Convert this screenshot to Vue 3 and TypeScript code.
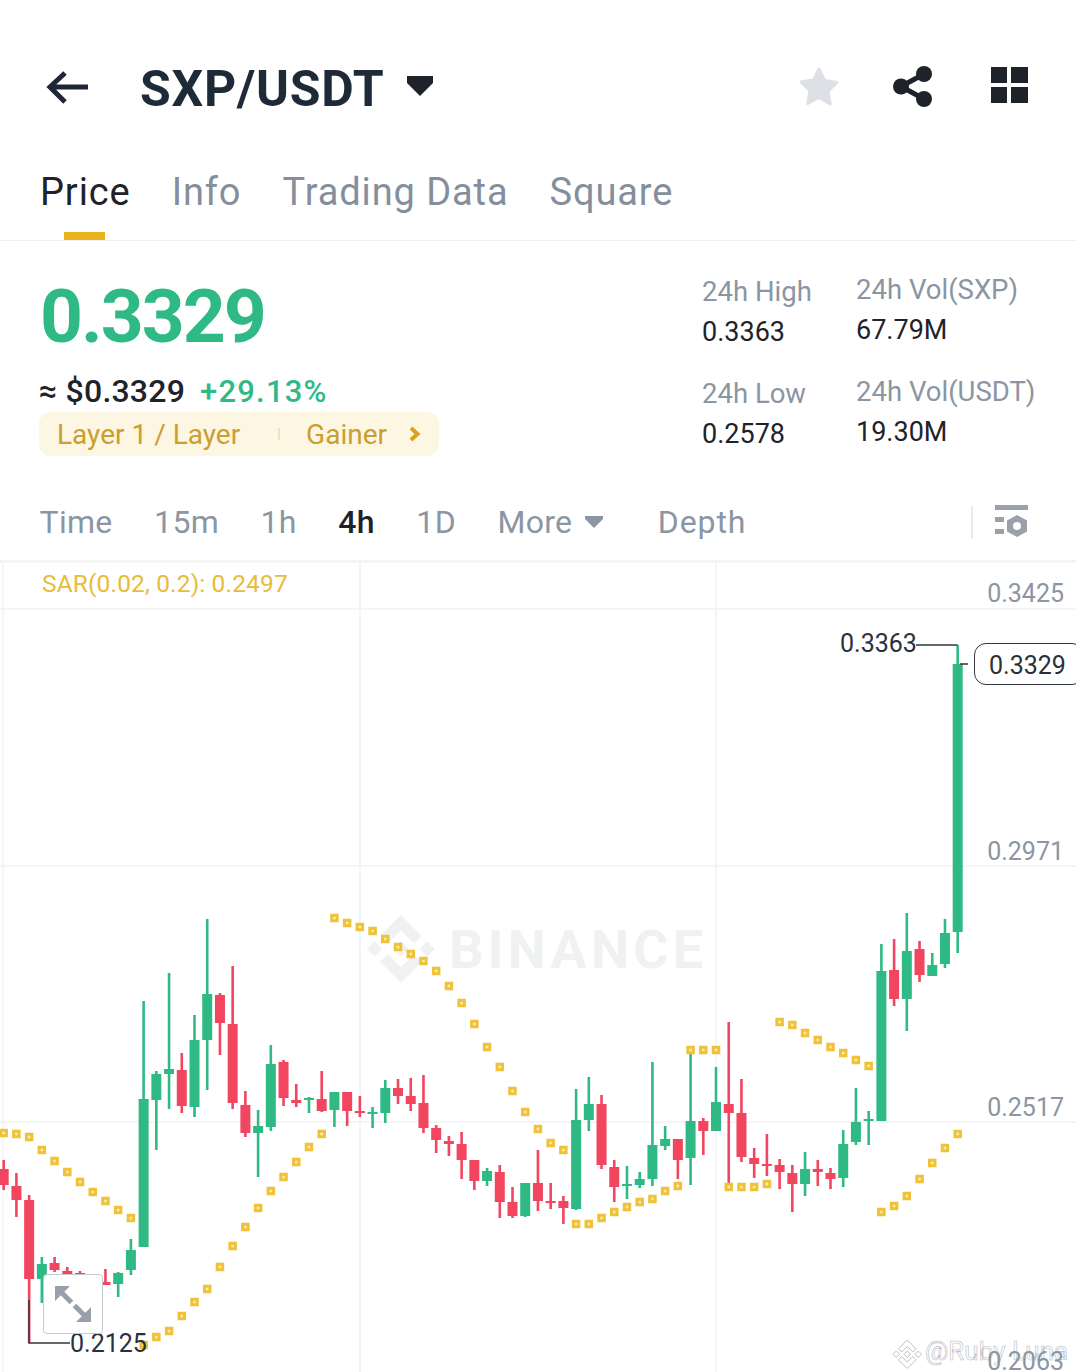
<template>
  <div class="screen">
    <header class="top-bar">
      <svg class="back-icon" viewBox="0 0 44 36" width="44" height="36">
        <path d="M42 16H5M19 2 4 16l15 15" fill="none" stroke="#1e2733" stroke-width="5" />
      </svg>
      <h1 class="pair">SXP/USDT</h1>
      <svg class="pair-caret" viewBox="0 0 26 20" width="26" height="20">
        <path d="M0 0h26v7L13 20 0 7z" fill="#1e2329" />
      </svg>
      <div class="top-actions">
        <svg viewBox="0 0 42 42" width="42" height="42">
          <path d="M21 4l5.600 11.600 12.400 1.800-9 8.900 2.200 12.700L21 32.500 9.800 38.500 12 25.800l-9-8.900 12.400-1.800z" fill="#dde0e4" stroke="#dde0e4" stroke-width="3" stroke-linejoin="round" />
        </svg>
        <svg viewBox="0 0 42 42" width="42" height="42">
          <path d="M32 9 9 21.500 32 34" fill="none" stroke="#1e2329" stroke-width="5" />
          <circle cx="32" cy="9" r="8" fill="#1e2329" />
          <circle cx="9" cy="21.500" r="8" fill="#1e2329" />
          <circle cx="32" cy="34" r="8" fill="#1e2329" />
        </svg>
        <svg class="top-actions__grid" viewBox="0 0 38 38" width="38" height="38">
          <path d="M0 0h16v16H0zM20 0h17v16H20zM0 20h16v16H0zM20 20h17v16H20z" fill="#1e2329" />
        </svg>
      </div>
    </header>

    <nav class="tabs">
      <div v-for="tab in tabs" :key="tab" class="tab" :class="{ 'tab--active': tab === 'Price' }">{{ tab }}</div>
    </nav>

    <section class="summary">
      <div class="summary__left">
        <div class="last-price">0.3329</div>
        <div class="fiat-line">
          <span class="fiat">≈ $0.3329</span>
          <span class="change">+29.13%</span>
        </div>
        <div class="tag-pill">
          <span class="tag-pill__first">Layer 1 / Layer</span>
          <i class="tag-pill__sep"></i>
          <span>Gainer</span>
          <svg viewBox="0 0 12 16" width="12" height="16">
            <path d="M2 2l6.500 6-6.500 6" fill="none" stroke="#d9a21b" stroke-width="4" />
          </svg>
        </div>
      </div>
      <div class="stats">
        <div v-for="col in stats" :key="col[0].label" class="stats__col">
          <div v-for="s in col" :key="s.label" class="stat">
            <div class="stat__label">{{ s.label }}</div>
            <div class="stat__value">{{ s.value }}</div>
          </div>
        </div>
      </div>
    </section>

    <div class="intervals">
      <span v-for="it in intervals" :key="it" class="interval" :class="{ 'interval--active': it === '4h' }">{{ it }}</span>
      <span class="interval interval--more">
        More
        <svg viewBox="0 0 18 12" width="18" height="12"><path d="M0 0h18v3l-9 9-9-9z" fill="#8b95a3" /></svg>
      </span>
      <span class="interval interval--depth">Depth</span>
      <i class="intervals__divider"></i>
      <svg class="settings-icon" viewBox="0 0 34 36" width="34" height="36">
        <path d="M0 1h33v5H0zM0 13h9v5H0zM0 25h9v5H0z" fill="#9aa1ab" />
        <path fill-rule="evenodd" d="M22 11l10 5.500v11L22 33l-10-5.500v-11zM22 18a4 4 0 1 0 0 8 4 4 0 0 0 0-8z" fill="#9aa1ab" />
      </svg>
    </div>

    <div class="chart">
      <svg class="chart__svg" viewBox="0 563 1076 809" width="1076" height="809">
        <g stroke="#f1f2f4" stroke-width="1.500">
          <line x1="0" y1="609" x2="1076" y2="609" />
          <line x1="0" y1="866" x2="1076" y2="866" />
          <line x1="0" y1="1122" x2="1076" y2="1122" />
          <line x1="3" y1="563" x2="3" y2="1372" />
          <line x1="360" y1="563" x2="360" y2="1372" />
          <line x1="716" y1="563" x2="716" y2="1372" />
        </g>

        <g transform="translate(367 915) scale(0.535)" fill="#eff1f2">
          <path :d="logoPath" />
        </g>
        <text class="watermark" x="449" y="968">BINANCE</text>

        <g v-for="(c, i) in candles" :key="i" :fill="c[4] === 'g' ? green : red">
          <rect :x="xAt(i) - 1.3" :y="c[0]" width="2.600" :height="c[3] - c[0]" />
          <rect :x="xAt(i) - 5" :y="c[1]" width="10" :height="c[2] - c[1]" />
        </g>

        <rect
          v-for="d in sarDots"
          :key="d[0]"
          class="sar-dot"
          :x="xAt(d[0]) - 2.75"
          :y="d[1] - 2.75"
          width="5.500"
          height="5.500"
        />

        <path d="M29 1300v43h41" fill="none" stroke="#2f3640" stroke-width="1.500" />
        <path d="M916 645h41.500" fill="none" stroke="#2f3640" stroke-width="1.500" />
        <path d="M960 664h8" fill="none" stroke="#2f3640" stroke-width="1.500" />

        <text class="axis" x="1064" y="602">0.3425</text>
        <text class="axis" x="1064" y="860">0.2971</text>
        <text class="axis" x="1064" y="1116">0.2517</text>
        <text class="peak" x="840" y="652">0.3363</text>

        <g transform="translate(893 1340) scale(0.225)" fill="#fff" stroke="#b4b8bd" stroke-width="4">
          <path :d="logoPath" />
        </g>
        <text class="credit" x="925" y="1360">@Ruby Luna</text>
        <text class="axis" x="1064" y="1370">0.2063</text>
        <text class="peak" x="70" y="1352">0.2125</text>
      </svg>

      <div class="chart__legend">SAR(0.02, 0.2): 0.2497</div>
      <div class="chart__last">0.3329</div>
      <button class="chart__expand" type="button">
        <svg viewBox="0 0 36 36" width="36" height="36">
          <path d="M0 0h15L0 15zM36 36H21l15-15z" fill="#9aa0a9" />
          <path d="M6 6l10.500 10.500M19.500 19.500L30 30" fill="none" stroke="#9aa0a9" stroke-width="5" />
        </svg>
      </button>
    </div>
  </div>
</template>

<script setup lang="ts">
type Candle = [number, number, number, number, 'g' | 'r']

const green = '#2fba85'
const red = '#f2455f'

const logoPath =
  'M38.73 53.2l24.59-24.58 24.6 24.6 14.3-14.31L63.32 0 24.42 38.9zM0 63.31l14.3-14.31 14.31 14.31-14.31 14.3zm38.73 10.1l24.59 24.59 24.6-24.6 14.31 14.29-38.9 38.91-38.91-38.88v-.03zm59.42-10.09l14.3-14.31 14.32 14.31-14.3 14.3zM77.83 63.3L63.32 48.78 52.59 59.51l-1.24 1.23-2.54 2.54 14.51 14.5 14.51-14.47z'

const tabs = ['Price', 'Info', 'Trading Data', 'Square']
const intervals = ['Time', '15m', '1h', '4h', '1D']

const stats = [
  [
    { label: '24h High', value: '0.3363' },
    { label: '24h Low', value: '0.2578' },
  ],
  [
    { label: '24h Vol(SXP)', value: '67.79M' },
    { label: '24h Vol(USDT)', value: '19.30M' },
  ],
]

const xAt = (i: number): number => 3.7 + 12.72 * i

// high, body top, body bottom, low (page pixels)
const candles: Candle[] = [
  [1160, 1169, 1185, 1190, 'r'], [1173, 1186, 1200, 1217, 'r'], [1195, 1200, 1279, 1343, 'r'],
  [1257, 1264, 1279, 1303, 'g'], [1257, 1263, 1270, 1272, 'r'], [1267, 1271, 1274, 1277, 'r'],
  [1271, 1273, 1277, 1280, 'r'], [1275, 1278, 1280, 1282, 'r'], [1269, 1282, 1285, 1285, 'r'],
  [1272, 1273, 1284, 1297, 'g'], [1239, 1250, 1270, 1275, 'g'], [1001, 1099, 1247, 1247, 'g'],
  [1071, 1074, 1100, 1150, 'g'], [973, 1069, 1074, 1109, 'g'], [1053, 1070, 1106, 1113, 'r'],
  [1015, 1040, 1107, 1117, 'g'], [919, 994, 1040, 1090, 'g'], [993, 995, 1023, 1055, 'r'],
  [966, 1024, 1103, 1109, 'r'], [1091, 1105, 1133, 1137, 'r'], [1110, 1126, 1133, 1177, 'g'],
  [1045, 1064, 1127, 1131, 'g'], [1060, 1062, 1098, 1106, 'r'], [1084, 1100, 1103, 1107, 'r'],
  [1097, 1098, 1100, 1113, 'g'], [1071, 1099, 1111, 1112, 'r'], [1092, 1092, 1110, 1127, 'g'],
  [1092, 1092, 1111, 1126, 'r'], [1096, 1111, 1113, 1117, 'r'], [1107, 1112, 1114, 1128, 'g'],
  [1080, 1088, 1113, 1123, 'g'], [1079, 1088, 1096, 1104, 'r'], [1078, 1096, 1104, 1111, 'r'],
  [1075, 1103, 1128, 1133, 'r'], [1125, 1128, 1140, 1153, 'r'], [1136, 1141, 1144, 1156, 'r'],
  [1132, 1144, 1160, 1179, 'r'], [1160, 1160, 1181, 1190, 'r'], [1168, 1171, 1181, 1186, 'g'],
  [1165, 1172, 1202, 1218, 'r'], [1187, 1202, 1216, 1218, 'r'], [1183, 1183, 1216, 1217, 'g'],
  [1150, 1183, 1201, 1211, 'r'], [1183, 1201, 1203, 1209, 'r'], [1196, 1201, 1208, 1224, 'r'],
  [1089, 1120, 1209, 1210, 'g'], [1077, 1104, 1120, 1131, 'g'], [1095, 1104, 1165, 1169, 'r'],
  [1160, 1167, 1187, 1202, 'r'], [1166, 1184, 1186, 1199, 'g'], [1172, 1179, 1185, 1188, 'g'],
  [1062, 1145, 1179, 1186, 'g'], [1126, 1139, 1146, 1150, 'g'], [1139, 1139, 1160, 1179, 'r'],
  [1050, 1121, 1158, 1185, 'g'], [1118, 1121, 1131, 1155, 'r'], [1067, 1102, 1131, 1131, 'g'],
  [1022, 1104, 1113, 1187, 'r'], [1079, 1113, 1157, 1162, 'r'], [1148, 1158, 1164, 1178, 'r'],
  [1134, 1164, 1166, 1176, 'r'], [1159, 1165, 1172, 1189, 'r'], [1165, 1173, 1184, 1212, 'r'],
  [1152, 1169, 1184, 1196, 'g'], [1160, 1169, 1172, 1186, 'r'], [1168, 1173, 1179, 1189, 'r'],
  [1130, 1144, 1178, 1187, 'g'], [1088, 1122, 1142, 1145, 'g'], [1111, 1119, 1121, 1145, 'g'],
  [944, 971, 1121, 1121, 'g'], [939, 970, 999, 1006, 'r'], [913, 951, 999, 1031, 'g'],
  [941, 949, 975, 982, 'r'], [953, 965, 976, 976, 'g'], [919, 933, 964, 968, 'g'],
  [645, 664, 932, 953, 'g'],
]

// candle index, y
const sarDots: [number, number][] = [
  [0, 1133], [1, 1134], [2, 1137], [3, 1150], [4, 1161], [5, 1172], [6, 1182], [7, 1192], [8, 1201],
  [9, 1210], [10, 1218], [11, 1345], [12, 1337], [13, 1331], [14, 1316], [15, 1302], [16, 1289],
  [17, 1267], [18, 1246], [19, 1227], [20, 1208], [21, 1191], [22, 1177], [23, 1162], [24, 1147],
  [25, 1134], [26, 918], [27, 923], [28, 927], [29, 931], [30, 939], [31, 947], [32, 954], [33, 961],
  [34, 971], [35, 986], [36, 1003], [37, 1024], [38, 1047], [39, 1067], [40, 1091], [41, 1112],
  [42, 1129], [43, 1143], [44, 1150], [45, 1224], [46, 1224], [47, 1218], [48, 1212], [49, 1207],
  [50, 1202], [51, 1199], [52, 1191], [53, 1186], [54, 1050], [55, 1050], [56, 1050], [57, 1187],
  [58, 1187], [59, 1187], [60, 1184], [61, 1022], [62, 1025], [63, 1033], [64, 1040], [65, 1047],
  [66, 1053], [67, 1060], [68, 1066], [69, 1212], [70, 1206], [71, 1196], [72, 1179], [73, 1163],
  [74, 1148], [75, 1134],
]
</script>

<style>
html,
body {
  margin: 0;
  background: #fff;
}
</style>

<style scoped>
.screen {
  width: 1076px;
  height: 1372px;
  overflow: hidden;
  background: #fff;
  font-family: Roboto, 'Liberation Sans', sans-serif;
  color: #1e2329;
}

.top-bar {
  display: flex;
  align-items: center;
  height: 172px;
  padding-left: 46px;
  box-sizing: border-box;
}
.back-icon {
  margin: 6px 50px 0 0;
}
.pair {
  margin: 6px 0 0;
  font-size: 50px;
  font-weight: 700;
  letter-spacing: 0.7px;
  color: #1f2a38;
  line-height: 1;
}
.pair-caret {
  margin-left: 22px;
}
.top-actions {
  display: flex;
  align-items: center;
  gap: 52px;
  margin-left: auto;
  padding-right: 47px;
}
.top-actions__grid {
  margin-left: 5px;
}

.tabs {
  display: flex;
  gap: 41px;
  height: 68px;
  padding-left: 40px;
  border-bottom: 1px solid #eef0f2;
}
.tab {
  position: relative;
  font-size: 38px;
  letter-spacing: 0.9px;
  line-height: 40px;
  color: #848e9c;
}
.tab--active {
  color: #1e2329;
}
.tab--active::after {
  content: '';
  position: absolute;
  left: 24px;
  top: 60px;
  width: 41px;
  height: 8px;
  background: #ebb31d;
}

.summary {
  display: flex;
  justify-content: space-between;
  height: 254px;
  padding: 0 39px;
  box-sizing: border-box;
}
.last-price {
  margin: 35px 0 0 1px;
  font-size: 75px;
  letter-spacing: -2px;
  line-height: 80px;
  font-weight: 700;
  color: #2fba85;
}
.fiat-line {
  display: flex;
  align-items: baseline;
  gap: 15px;
  margin-top: 15px;
  line-height: 40px;
}
.fiat {
  font-size: 32px;
  font-weight: 500;
  letter-spacing: 0.2px;
}
.change {
  font-size: 31px;
  font-weight: 500;
  letter-spacing: 1.2px;
  color: #2fba85;
}
.tag-pill {
  display: flex;
  align-items: center;
  width: 400px;
  height: 44px;
  padding: 0 18px;
  box-sizing: border-box;
  background: #fdf6e3;
  border-radius: 12px;
  font-size: 28px;
  color: #c9a02f;
}
.tag-pill__first {
  width: 222px;
}
.tag-pill__sep {
  width: 2px;
  height: 12px;
  margin-right: 26px;
  background: #efe3bd;
}
.tag-pill svg {
  margin-left: 22px;
}

.stats {
  display: flex;
  gap: 44px;
  padding-top: 29px;
  white-space: nowrap;
}
.stats__col:first-child {
  padding-top: 2px;
  width: 110px;
}
.stats__col:last-child {
  width: 181px;
}
.stat {
  height: 102px;
}
.stat__label {
  font-size: 27.500px;
  line-height: 40px;
  color: #8b95a3;
}
.stat__value {
  font-size: 27px;
  line-height: 40px;
  color: #1e2329;
}

.intervals {
  display: flex;
  align-items: center;
  gap: 41.500px;
  height: 68px;
  padding: 0 47px 11px 39.500px;
  box-sizing: border-box;
  border-bottom: 3px solid #f5f5f6;
}
.interval {
  font-size: 32px;
  letter-spacing: 0.3px;
  color: #8b95a3;
}
.interval--active {
  color: #1e2329;
  font-weight: 500;
}
.interval--more {
  display: flex;
  align-items: center;
  gap: 13px;
}
.interval--depth {
  margin-left: 13px;
  letter-spacing: 0.9px;
}
.intervals__divider {
  width: 2px;
  height: 33px;
  margin-left: auto;
  margin-right: -19px;
  background: #e9ebee;
}
.settings-icon {
  display: block;
}

.chart {
  position: relative;
  height: 809px;
}
.chart__svg {
  display: block;
}
.watermark {
  font-size: 54px;
  font-weight: 700;
  fill: #eff1f2;
  letter-spacing: 4.200px;
}
.sar-dot {
  fill: #fbeeb0;
  stroke: #efc23a;
  stroke-width: 3;
}
.axis {
  font-size: 25px;
  fill: #8b95a3;
  text-anchor: end;
}
.peak {
  font-size: 25px;
  fill: #2a313b;
}
.credit {
  font-size: 26px;
  fill: #fff;
  stroke: #b8bcc1;
  stroke-width: 0.6px;
}
.chart__legend {
  position: absolute;
  left: 42px;
  top: 7px;
  font-size: 24.500px;
  letter-spacing: 0.150px;
  line-height: 28px;
  color: #e8bc3a;
}
.chart__last {
  position: absolute;
  left: 974px;
  top: 80px;
  width: 110px;
  height: 42px;
  box-sizing: border-box;
  padding-left: 14px;
  border: 1.500px solid #2f3640;
  border-radius: 12px;
  background: #fff;
  font-size: 25px;
  line-height: 43px;
  color: #2a313b;
}
.chart__expand {
  position: absolute;
  left: 43px;
  top: 711px;
  display: flex;
  align-items: center;
  justify-content: center;
  width: 60px;
  height: 60px;
  padding: 0;
  border: 1.500px solid #c6cacf;
  border-radius: 4px;
  background: #fff;
}
</style>
